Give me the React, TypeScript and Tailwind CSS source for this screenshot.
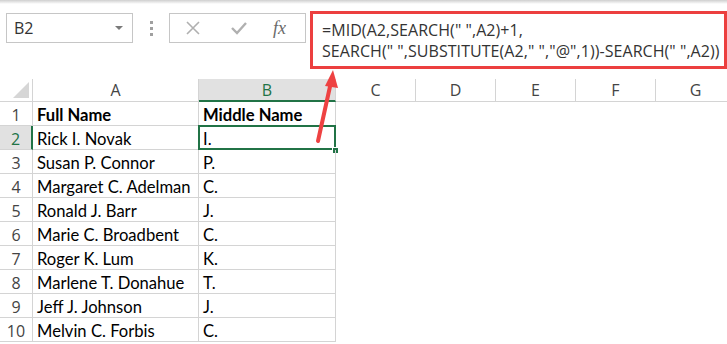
import React from "react";

const rows = [
  ["Full Name", "Middle Name"],
  ["Rick I. Novak", "I."],
  ["Susan P. Connor", "P."],
  ["Margaret C. Adelman", "C."],
  ["Ronald J. Barr", "J."],
  ["Marie C. Broadbent", "C."],
  ["Roger K. Lum", "K."],
  ["Marlene T. Donahue", "T."],
  ["Jeff J. Johnson", "J."],
  ["Melvin C. Forbis", "C."],
];

const cols = ["A", "B", "C", "D", "E", "F", "G"];

const uiFont = { fontFamily: '"Open Sans", "Noto Sans", sans-serif' };
const cellFont = { fontFamily: 'Lato, "Open Sans", sans-serif' };

const FormulaBar = () => (
  <div className="h-[79px] flex flex-col">
    <div className="h-[4px] bg-gradient-to-b from-[#cfcfcf] to-white" />
    <div className="flex items-start pt-[7px]">
      <div className="ml-[6px] mt-[2px] w-[127px] h-[30px] border border-[#c6c6c6] flex items-center justify-between pl-[7px] pr-[9px]">
        <span className="text-[16px] text-[#333]" style={uiFont}>B2</span>
        <span className="w-0 h-0 border-l-[4px] border-r-[4px] border-t-[4px] border-l-transparent border-r-transparent border-t-[#7a7a7a]" />
      </div>
      <div className="ml-[17px] mt-[10px] flex flex-col gap-[3px]">
        <span className="w-[3px] h-[3px] bg-[#a0a0a0]" />
        <span className="w-[3px] h-[3px] bg-[#a0a0a0]" />
        <span className="w-[3px] h-[3px] bg-[#a0a0a0]" />
      </div>
      <div className="ml-[16px] mt-[2px] w-[137px] h-[30px] border border-[#c6c6c6] flex items-center">
        <svg width="14" height="14" viewBox="0 0 14 14" className="ml-[16px]">
          <path d="M1 1 L13 13 M13 1 L1 13" stroke="#b0b0b0" strokeWidth="1.6" fill="none" />
        </svg>
        <svg width="16" height="14" viewBox="0 0 16 14" className="ml-[31px]">
          <path d="M1 7 L6 12 L15 2" stroke="#b0b0b0" strokeWidth="2.4" fill="none" />
        </svg>
        <span
          className="ml-[26px] text-[18px] italic text-[#6a6a6a]"
          style={{ fontFamily: '"Liberation Serif", serif' }}
        >
          fx
        </span>
      </div>
      <div
        className="ml-[4px] w-[417px] h-[58px] border-[3px] border-[#ec3f3f] pl-[9px] pt-[6px] text-[16px] leading-[21px] tracking-[0.06px] text-[#333] whitespace-nowrap"
        style={uiFont}
      >
        <div>{'=MID(A2,SEARCH(" ",A2)+1,'}</div>
        <div>{'SEARCH(" ",SUBSTITUTE(A2," ","@",1))-SEARCH(" ",A2))'}</div>
      </div>
    </div>
  </div>
);

const Sheet = () => (
  <div className="grid grid-cols-[33px_166px_137px_80px_80px_80px_80px_80px] grid-rows-[23px_repeat(10,24px)]">
    <div className="border-r border-b border-[#d4d4d4] flex items-end justify-end pr-[3px] pb-[3px]">
      <svg width="16" height="16" viewBox="0 0 16 16">
        <path d="M16 0 L16 16 L0 16 Z" fill="#d6d6d6" />
      </svg>
    </div>
    {cols.map((c) =>
      c === "B" ? (
        <div
          key={c}
          className="bg-[#e1e1e1] border-r border-[#d4d4d4] border-b-2 border-b-[#217346] flex items-center justify-center text-[16px] text-[#217346]"
          style={uiFont}
        >
          {c}
        </div>
      ) : (
        <div
          key={c}
          className="border-r border-b border-[#d4d4d4] flex items-center justify-center text-[16px] text-[#444]"
          style={uiFont}
        >
          {c}
        </div>
      )
    )}
    {rows.map(([name, mid], i) => {
      const n = i + 1;
      const active = n === 2;
      return (
        <React.Fragment key={n}>
          <div
            className={
              active
                ? "bg-[#e1e1e1] border-b border-[#d4d4d4] border-r-2 border-r-[#217346] flex items-center justify-center pt-[2px] text-[16px] text-[#217346]"
                : "border-r border-b border-[#d4d4d4] flex items-center justify-center pt-[2px] text-[16px] text-[#444]"
            }
            style={uiFont}
          >
            {n}
          </div>
          <div
            className={`border-r border-b border-[#d4d4d4] flex items-center pl-[4px] pt-[3px] text-[16.6px] text-black whitespace-nowrap ${n === 1 ? "font-bold" : ""}`}
            style={cellFont}
          >
            {name}
          </div>
          <div
            className={`relative border-r border-b border-[#d4d4d4] flex items-center pl-[4px] pt-[3px] text-[16.6px] text-black whitespace-nowrap ${n === 1 ? "font-bold" : ""}`}
            style={cellFont}
          >
            {mid}
            {active && (
              <>
                <div className="absolute left-[-1px] top-[-1px] right-[-1px] bottom-[-1px] border-2 border-[#217346]" />
                <div className="absolute right-[-3px] bottom-[-4px] w-[5px] h-[5px] bg-[#217346] outline outline-1 outline-white" />
              </>
            )}
          </div>
          <div />
          <div />
          <div />
          <div />
          <div />
        </React.Fragment>
      );
    })}
  </div>
);

export default function App() {
  return (
    <div className="relative w-[727px] h-[344px] bg-white overflow-hidden">
      <FormulaBar />
      <Sheet />
      <svg className="absolute left-0 top-0 pointer-events-none" width="727" height="344">
        <line x1="318" y1="141" x2="331" y2="82" stroke="#ee4242" strokeWidth="4" strokeLinecap="round" />
        <path d="M333 70 L325 86 L338 88 Z" fill="#ee4242" />
      </svg>
    </div>
  );
}
